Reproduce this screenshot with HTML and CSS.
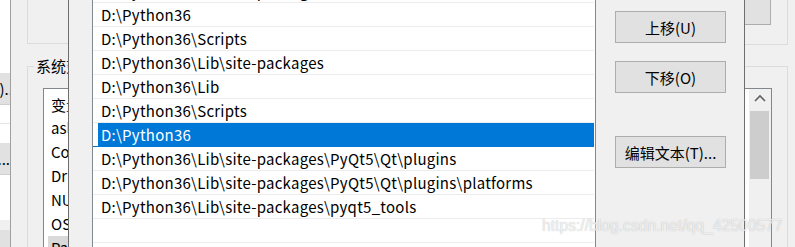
FILE: index.html
```html
<!DOCTYPE html>
<html lang="zh-CN">
<head>
  <meta charset="UTF-8">
  <title>编辑环境变量</title>
  <link rel="stylesheet" href="styles.css">
</head>
<body>
  <div class="screen">

    <!-- back window, left part -->
    <div class="back back-left">
      <div class="side-col">
        <div class="side-cell h73"></div>
        <div class="side-btn"><span class="peek-a">编辑(E)...</span></div>
        <div class="side-cell h19 sep"></div>
        <div class="side-cell h19"></div>
        <div class="side-btn"><span class="peek-b">编辑(I)...</span></div>
        <div class="side-cell h45"></div>
        <div class="side-cell h10 light"></div>
        <div class="side-cell grow dark"></div>
      </div>
      <div class="back-body">
        <div class="group-user"></div>
        <fieldset class="group-sys">
          <legend>系统变量(S)</legend>
          <div class="sys-list">
            <div class="sys-head">变量</div>
            <div class="sys-row">asl.log</div>
            <div class="sys-row">ComSpec</div>
            <div class="sys-row">DriverData</div>
            <div class="sys-row">NUMBER_OF_PROCESSORS</div>
            <div class="sys-row">OS</div>
            <div class="sys-row picked">Path</div>
          </div>
        </fieldset>
      </div>
    </div>

    <!-- front dialog -->
    <div class="dialog">
      <div class="path-list">
        <div class="row"><span class="cell">D:\Python36\Lib\site-packages</span></div>
        <div class="row"><span class="cell">D:\Python36</span></div>
        <div class="row"><span class="cell">D:\Python36\Scripts</span></div>
        <div class="row"><span class="cell">D:\Python36\Lib\site-packages</span></div>
        <div class="row"><span class="cell">D:\Python36\Lib</span></div>
        <div class="row"><span class="cell">D:\Python36\Scripts</span></div>
        <div class="row selected"><span class="cell">D:\Python36</span></div>
        <div class="row"><span class="cell">D:\Python36\Lib\site-packages\PyQt5\Qt\plugins</span></div>
        <div class="row"><span class="cell">D:\Python36\Lib\site-packages\PyQt5\Qt\plugins\platforms</span></div>
        <div class="row"><span class="cell">D:\Python36\Lib\site-packages\pyqt5_tools</span></div>
        <div class="row"><span class="cell"></span></div>
        <div class="row"><span class="cell"></span></div>
      </div>
      <div class="btns">
        <button class="btn">上移(U)</button>
        <button class="btn">下移(O)</button>
        <button class="btn btn-gap">编辑文本(T)...</button>
      </div>
    </div>

    <!-- back window, right part -->
    <div class="back back-right">
      <div class="group-user-r">
        <div class="peek-btn"></div>
      </div>
      <div class="group-sys-r">
        <div class="sys-list-r">
          <div class="scrollbar">
            <div class="sb-arrow">
              <svg width="22" height="22" viewBox="0 0 22 22"><polyline points="6,12 11,7 16,12" fill="none" stroke="#606060" stroke-width="1.6"/></svg>
            </div>
            <div class="sb-thumb"></div>
          </div>
        </div>
      </div>
    </div>

    <div class="watermark">https://blog.csdn.net/qq_42500577</div>
  </div>
</body>
</html>
```

FILE: styles.css
```css
* { box-sizing: border-box; }
body {
  margin: 0; width: 795px; height: 247px; overflow: hidden;
  background: #f0f0f0; color: #000;
  font-family: "Noto Sans CJK SC", "Microsoft YaHei", sans-serif;
  font-size: 15px;
}
.screen { display: flex; height: 247px; overflow: hidden; position: relative; }

/* back window - left */
.back { height: 247px; overflow: hidden; flex: none; }
.back-left { width: 68px; display: flex; }
.side-col {
  width: 11px; border-right: 1px solid #a0a0a0;
  display: flex; flex-direction: column;
}
.side-cell { background: #fff; }
.side-cell.h73 { height: 73px; }
.side-cell.h19 { height: 19px; }
.side-cell.h45 { height: 45px; }
.side-cell.h10 { height: 10px; }
.side-cell.sep { border-bottom: 1px solid #e5e5e5; }
.side-cell.light { background: #f0f0f0; }
.side-cell.dark { background: #e1e1e1; }
.side-cell.grow { flex: 1; }
.side-btn {
  height: 32px; background: #e1e1e1; border-bottom: 1px solid #cfcfcf;
  display: flex; align-items: center; justify-content: flex-end;
  overflow: hidden; white-space: nowrap; line-height: 20px;
}
.peek-a { margin-right: -7px; }
.peek-b { margin-right: 0; }

.back-body { flex: 1; }
.group-user {
  margin-left: 16px; height: 44px;
  border-left: 1px solid #dcdcdc; border-bottom: 1px solid #dcdcdc;
}
.group-sys {
  margin: 12px 0 0 16px; padding: 0; min-width: 0;
  border: none; border-top: 1px solid #dcdcdc; border-left: 1px solid #dcdcdc;
  height: 191px;
}
.group-sys legend {
  margin-left: 6px; padding: 0 2px; line-height: 20px; white-space: nowrap;
}
.sys-list {
  margin: 12px 0 0 15px; background: #fff; height: 159px; overflow: hidden;
  border-top: 1px solid #828790; border-left: 1px solid #828790;
  white-space: nowrap;
}
.sys-head { height: 27px; padding: 4px 0 0 7px; line-height: 23px; }
.sys-row { height: 24px; line-height: 24px; margin-left: 4px; padding-left: 3px; }
.sys-row.picked { background: #d9d9d9; }

/* front dialog */
.dialog {
  width: 677px; flex: none; height: 247px;
  border-left: 1px solid #6e6e6e; border-right: 1px solid #6e6e6e;
  display: flex; padding-left: 23px;
}
.path-list {
  width: 504px; height: 269px; margin-top: -22px; overflow: hidden;
  background: #fff; border: 1px solid #828790; border-bottom: none;
  padding-right: 1px; white-space: nowrap;
}
.row {
  height: 24px; border-bottom: 1px solid #ececec;
  padding-left: 5px;
}
.cell {
  display: block; height: 23px; line-height: 23px; padding-left: 3px;
  letter-spacing: 0.25px;
}
.row.selected { border-bottom-color: #0078d7; padding-left: 0; }
.row.selected .cell { margin-left: 5px; background: #0078d7; color: #fff; }

.btns {
  margin-left: 19px; padding-top: 11px;
  display: flex; flex-direction: column; gap: 18px;
}
.btn {
  width: 111px; height: 32px; padding: 0;
  background: #e1e1e1; border: 1px solid #adadad;
  font-family: inherit; font-size: 15px; color: #000;
}
.btn.btn-gap { margin-top: 25px; }

/* back window - right */
.back-right { width: 50px; }
.group-user-r {
  width: 43px; height: 45px;
  border-right: 1px solid #dcdcdc; border-bottom: 1px solid #dcdcdc;
}
.peek-btn {
  width: 26px; height: 25px; background: #e1e1e1;
  border-right: 1px solid #adadad; border-bottom: 1px solid #adadad;
}
.group-sys-r {
  width: 43px; height: 181px; margin-top: 21px;
  border-top: 1px solid #dcdcdc; border-right: 1px solid #dcdcdc;
}
.sys-list-r {
  width: 27px; height: 159px; margin-top: 21px; padding-left: 4px;
  background: #fff; border-top: 1px solid #828790; border-right: 1px solid #828790;
}
.scrollbar {
  width: 22px; height: 100%; background: #f0f0f0;
  padding: 0 2px 0 1px;
}
.sb-arrow { height: 22px; margin-left: -1px; }
.sb-arrow svg { display: block; }
.sb-thumb { height: 68px; background: #cdcdcd; }

.watermark {
  position: absolute; left: 542px; top: 216px;
  font-family: "Liberation Sans", Arial, sans-serif; font-size: 15.7px;
  line-height: 20px; white-space: nowrap;
  color: rgba(255, 255, 255, 0.75);
  text-shadow: 0 0 1px rgba(120, 120, 120, 0.55);
}
```
